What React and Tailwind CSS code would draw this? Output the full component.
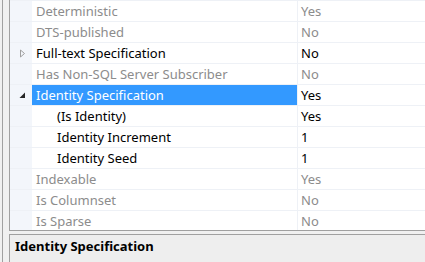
import React from "react";

const rows = [
  { name: "Deterministic", value: "Yes", muted: true },
  { name: "DTS-published", value: "No", muted: true },
  { name: "Full-text Specification", value: "No", expander: "closed" },
  { name: "Has Non-SQL Server Subscriber", value: "No", muted: true },
  { name: "Identity Specification", value: "Yes", expander: "open", selected: true },
  { name: "(Is Identity)", value: "Yes", child: true },
  { name: "Identity Increment", value: "1", child: true },
  { name: "Identity Seed", value: "1", child: true },
  { name: "Indexable", value: "Yes", muted: true },
  { name: "Is Columnset", value: "No", muted: true },
  { name: "Is Sparse", value: "No", muted: true },
];

function Expander({ type }) {
  if (type === "closed") {
    return (
      <svg width="7" height="9" viewBox="0 0 7 9" className="block">
        <path d="M1.5 1 L5.5 4.5 L1.5 8 Z" fill="none" stroke="#a0a0a0" strokeWidth="1" />
      </svg>
    );
  }
  return (
    <svg width="7" height="7" viewBox="0 0 7 7" className="block">
      <path d="M6 0.5 L6 6 L0.5 6 Z" fill="#262626" />
    </svg>
  );
}

function Row({ row }) {
  const nameColor = row.selected
    ? "text-white"
    : row.muted
    ? "text-[#8c8c8c]"
    : "text-black";
  const valueColor = row.muted ? "text-[#8c8c8c]" : "text-black";
  return (
    <div className="flex h-[21px] shrink-0 border-b border-[#eef1f6]">
      {/* gutter */}
      <div className="w-[22px] shrink-0 bg-[#f3f6fb] flex items-center justify-center pl-[2px]">
        {row.expander && <Expander type={row.expander} />}
      </div>
      {/* name */}
      <div
        className={`w-[266px] shrink-0 flex items-center border-r border-[#eef1f6] whitespace-nowrap overflow-hidden ${
          row.selected ? "bg-[#3399ff]" : "bg-white"
        } ${row.child ? "pl-[25px]" : "pl-[4px]"} ${nameColor}`}
      >
        {row.name}
      </div>
      {/* value */}
      <div className={`flex-1 flex items-center pl-[3px] bg-white whitespace-nowrap ${valueColor}`}>
        {row.value}
      </div>
    </div>
  );
}

export default function App() {
  return (
    <div
      className="w-[425px] h-[262px] overflow-hidden bg-[#f0f0f0] flex text-[13px] leading-none"
      style={{ fontFamily: '"Noto Sans", "Noto Sans CJK JP", sans-serif' }}
    >
      <div className="w-[2px] shrink-0" />
      <div className="w-px shrink-0 bg-[#a0a0a0]" />
      <div className="flex-1 flex flex-col pl-[6px]">
        {/* property grid */}
        <div className="h-[231px] shrink-0 flex flex-col overflow-hidden border-l border-b border-[#a0a0a0] bg-white">
          <div className="h-px shrink-0 bg-[#eef1f6]" />
          {rows.map((r) => (
            <Row key={r.name} row={r} />
          ))}
        </div>
        {/* description */}
        <div className="mt-[3px] flex-1 border-l border-t border-[#a0a0a0] bg-[#eeeeee] pl-[5px] pt-[5px]">
          <div className="font-bold text-black">Identity Specification</div>
        </div>
      </div>
    </div>
  );
}
